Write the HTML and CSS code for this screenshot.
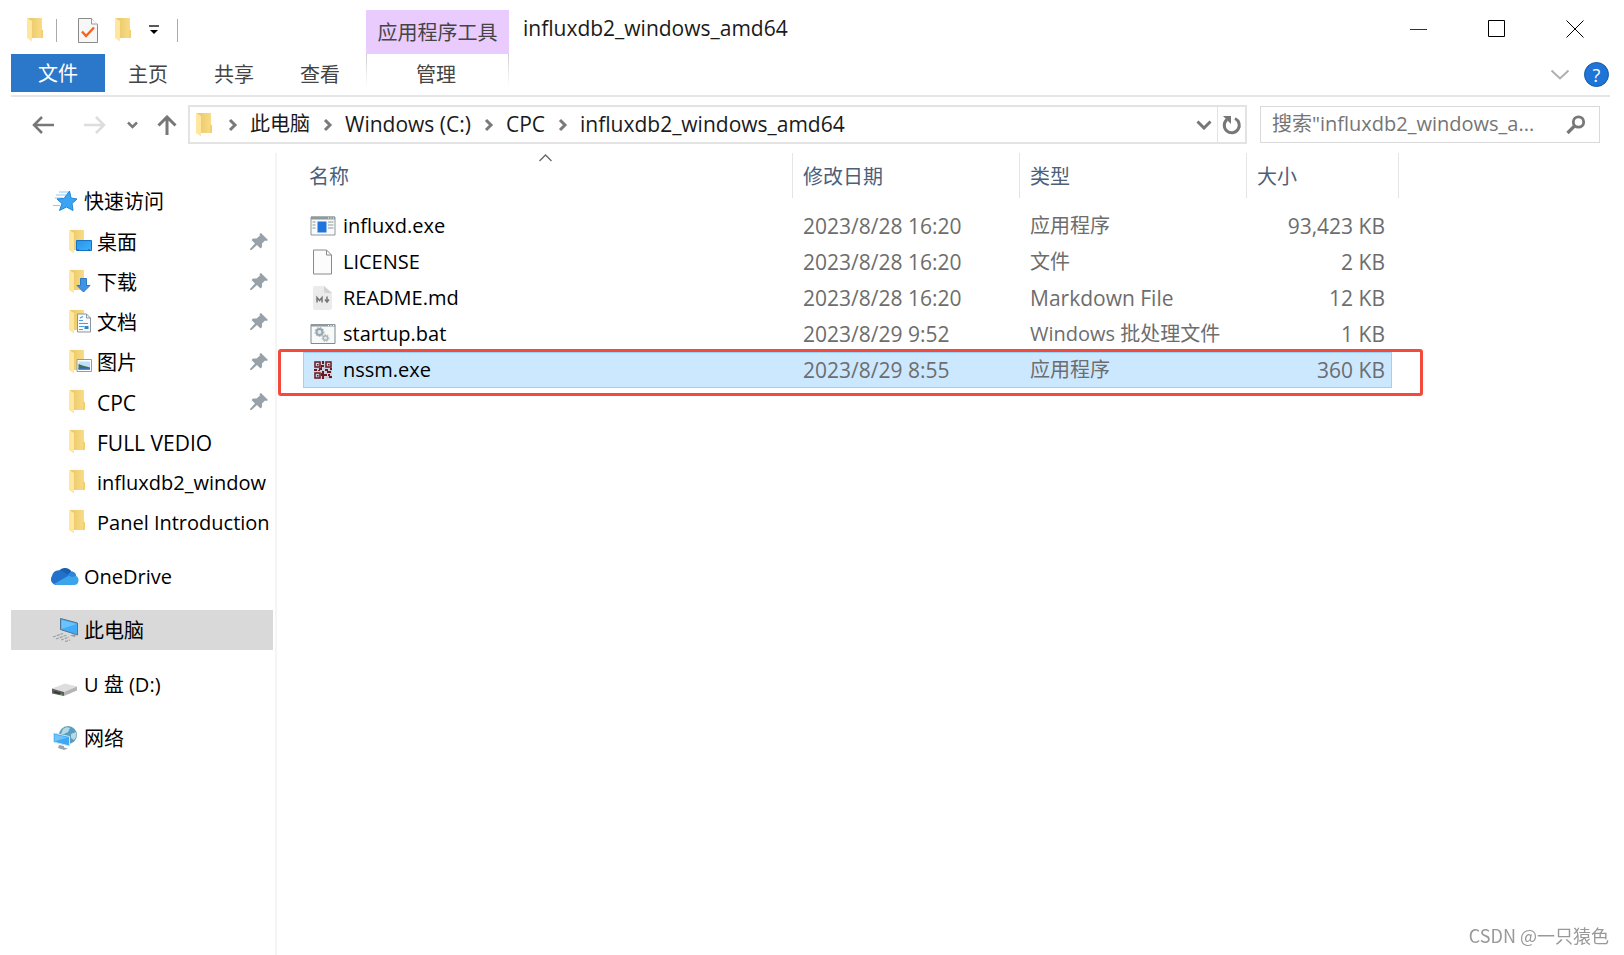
FILE: index.html
```html
<!DOCTYPE html>
<html lang="zh-CN">
<head>
<meta charset="UTF-8" />
<meta name="viewport" content="width=device-width, initial-scale=1" />
<title>influxdb2_windows_amd64</title>
<link rel="stylesheet" href="styles.css">
</head>
<body>

<svg class="sprite" aria-hidden="true">
  <defs>
    <linearGradient id="g-back" x1="0" x2="1"><stop offset="0" stop-color="#e9c767"/><stop offset="1" stop-color="#fbdd88"/></linearGradient>
    <linearGradient id="g-screen" x1="0" y1="0" x2="1" y2="1"><stop offset="0" stop-color="#2b93e6"/><stop offset="1" stop-color="#3fb0ff"/></linearGradient>
  </defs>
  <symbol id="folder" viewBox="0 0 24 24">
    <path d="M1 0h14v12h1v8H5z" fill="url(#g-back)"/>
    <path d="M14 12h2v8h-2z" fill="#f3cf74"/>
    <path d="M0 0l5 3v20.500l-5-3.500z" fill="#ffe7a0"/>
  </symbol>
  <symbol id="chevron-right" viewBox="0 0 10 14"><path d="M2 2l5 5-5 5" fill="none" stroke="#7a7a7a" stroke-width="3"/></symbol>
  <symbol id="pin" viewBox="0 0 18 18"><path d="M11 0l7 7-1.500 1-1.500-.5-3 3v3.500l-1.500 1.500-3.500-3.500-5.500 5H0v-1L5 10.500l-3.500-3.500L3 5.500h3.500l3.500-3L9.500 1z" fill="#98a1a9"/></symbol>
</svg>

<header class="titlebar">
  <div class="quick-bar">
    <svg class="icon" viewBox="0 0 24 24"><use href="#folder"/></svg>
    <span class="divider"></span>
    <button class="icon-btn" aria-label="属性">
      <svg width="20" height="25" viewBox="0 0 20 25"><path d="M.5.5h13l6 6v18H.5z" fill="#f7f7f7" stroke="#8a8a8a"/><path d="M13.500.5v5.500h6" fill="#fff" stroke="#999"/><path d="M4 13.500l4 4.500 8-8.500" fill="none" stroke="#f26522" stroke-width="2.400"/></svg>
    </button>
    <button class="icon-btn" aria-label="新建文件夹">
      <svg class="icon" viewBox="0 0 24 24"><use href="#folder"/></svg>
    </button>
    <button class="icon-btn" aria-label="自定义快速访问工具栏">
      <svg width="10" height="10" viewBox="0 0 10 10"><path d="M0 1h10" stroke="#222" stroke-width="1.500"/><path d="M1 5h8L5 9z" fill="#000"/></svg>
    </button>
    <span class="divider"></span>
  </div>
  <div class="context-label">应用程序工具</div>
  <h1 class="title latin">influxdb2_windows_amd64</h1>
  <div class="window-buttons">
    <button aria-label="最小化"><svg width="18" height="18" viewBox="0 0 18 18"><path d="M0 9.500h17" stroke="#333"/></svg></button>
    <button aria-label="最大化"><svg width="18" height="18" viewBox="0 0 18 18"><path d="M.5.5h16v16H.5z" fill="none" stroke="#000"/></svg></button>
    <button aria-label="关闭"><svg width="18" height="18" viewBox="0 0 18 18"><path d="M.5.5l17 17M17.500.5l-17 17" stroke="#000"/></svg></button>
  </div>
</header>

<nav class="ribbon">
  <button class="tab file-tab">文件</button>
  <button class="tab">主页</button>
  <button class="tab">共享</button>
  <button class="tab">查看</button>
  <button class="tab context-tab">管理</button>
  <div class="ribbon-end">
    <button class="icon-btn" aria-label="展开功能区"><svg width="20" height="12" viewBox="0 0 20 12"><path d="M1.500 1.500l8.500 8 8.500-8" fill="none" stroke="#b0b0b0" stroke-width="2"/></svg></button>
    <button class="help" aria-label="帮助">?</button>
  </div>
</nav>

<div class="navbar">
  <div class="history">
    <button class="icon-btn" aria-label="后退"><svg width="22" height="20" viewBox="0 0 22 20"><path d="M22 10H2M10 2l-8 8 8 8" fill="none" stroke="#777" stroke-width="2.500"/></svg></button>
    <button class="icon-btn" aria-label="前进"><svg width="22" height="20" viewBox="0 0 22 20"><path d="M0 10h20M12 2l8 8-8 8" fill="none" stroke="#ddd" stroke-width="2.500"/></svg></button>
    <button class="icon-btn" aria-label="最近浏览的位置"><svg width="11" height="8" viewBox="0 0 11 8"><path d="M1 1.500l4.500 4.500L10 1.500" fill="none" stroke="#7a7a7a" stroke-width="2.500"/></svg></button>
    <button class="icon-btn" aria-label="上移"><svg width="20" height="20" viewBox="0 0 20 20"><path d="M10 20V2M1.500 10.500L10 2l8.500 8.500" fill="none" stroke="#777" stroke-width="3"/></svg></button>
  </div>
  <div class="address">
    <svg class="icon" viewBox="0 0 24 24"><use href="#folder"/></svg>
    <svg class="sep" viewBox="0 0 10 14"><use href="#chevron-right"/></svg>
    <a href="#">此电脑</a>
    <svg class="sep" viewBox="0 0 10 14"><use href="#chevron-right"/></svg>
    <a class="latin" href="#">Windows (C:)</a>
    <svg class="sep" viewBox="0 0 10 14"><use href="#chevron-right"/></svg>
    <a class="latin" href="#">CPC</a>
    <svg class="sep" viewBox="0 0 10 14"><use href="#chevron-right"/></svg>
    <a class="latin" href="#">influxdb2_windows_amd64</a>
    <button class="icon-btn address-drop" aria-label="上一个位置"><svg width="16" height="10" viewBox="0 0 16 10"><path d="M1.500 1.500L8 8l6.500-6.500" fill="none" stroke="#777" stroke-width="3"/></svg></button>
    <button class="icon-btn refresh" aria-label="刷新"><svg width="20" height="20" viewBox="0 0 20 20"><path d="M13 3.500a7.500 7.500 0 1 1-8 1" fill="none" stroke="#777" stroke-width="3"/><path d="M1 1h8v8L6.500 6.500 4 4z" fill="#777"/></svg></button>
  </div>
  <div class="search">
    <input type="search" aria-label="搜索" placeholder="搜索&quot;influxdb2_windows_a...">
    <svg width="20" height="20" viewBox="0 0 20 20"><circle cx="12.500" cy="7" r="5.200" fill="none" stroke="#777" stroke-width="2.800"/><path d="M8.500 11L1.500 18" stroke="#777" stroke-width="3.200"/></svg>
  </div>
</div>

<div class="body">
  <aside class="sidebar">
    <a class="place" href="#">
      <svg class="icon-lg" viewBox="0 0 28 24"><path d="M5 6h10M4 9h8M8 3h9M2 16.500h7" stroke="#8cc9f7"/><path d="M18.500 2l1.500 7 6 1-5 4.500 1 7-6.500-3.500-7 3.500 2.500-7L6 10l7-.5z" fill="#3aa5f5" stroke="#1f85d6"/></svg>
      <span>快速访问</span>
    </a>
    <div class="pinned">
      <a class="place" href="#">
        <svg class="icon" viewBox="0 0 24 24"><use href="#folder"/><path d="M7.500 10.500h15v10h-15z" fill="url(#g-screen)" stroke="#1274c4"/><path d="M8 20h14" stroke="#0c5a9e" stroke-dasharray="2 9"/></svg>
        <span>桌面</span>
        <svg class="pin" viewBox="0 0 18 18"><use href="#pin"/></svg>
      </a>
      <a class="place" href="#">
        <svg class="icon" viewBox="0 0 24 24"><use href="#folder"/><path d="M11.500 8.500h6v7h3.500L14.500 22 8 15.500h3.500z" fill="#3f93e3" stroke="#2a78c6"/></svg>
        <span>下载</span>
        <svg class="pin" viewBox="0 0 18 18"><use href="#pin"/></svg>
      </a>
      <a class="place" href="#">
        <svg class="icon" viewBox="0 0 24 24"><use href="#folder"/><path d="M8.500 4h9l4 4v14h-13z" fill="#f8fafb" stroke="#8b969c"/><path d="M17.500 4v4h4" fill="none" stroke="#8b969c"/><path d="M10 10.500h4M10 13.500h9M10 16.500h5M10 19.500h4M11 8l3-1.500" stroke="#4a9edb" stroke-width="1.200"/><path d="M15.500 16h4v3h-4z" fill="#2f86c8"/></svg>
        <span>文档</span>
        <svg class="pin" viewBox="0 0 18 18"><use href="#pin"/></svg>
      </a>
      <a class="place" href="#">
        <svg class="icon" viewBox="0 0 24 24"><use href="#folder"/><path d="M8 9.500h14.500v12H8z" fill="#fff" stroke="#9a9a9a"/><path d="M9.500 11.500h11.500v8H9.500z" fill="#bfe0f8"/><path d="M9.500 14l4 1.500 7.500 2v2H9.500z" fill="#3f6f5c"/><path d="M9.500 18h11.500v1.500H9.500z" fill="#3b6fb0"/></svg>
        <span>图片</span>
        <svg class="pin" viewBox="0 0 18 18"><use href="#pin"/></svg>
      </a>
      <a class="place latin" href="#">
        <svg class="icon" viewBox="0 0 24 24"><use href="#folder"/></svg>
        <span>CPC</span>
        <svg class="pin" viewBox="0 0 18 18"><use href="#pin"/></svg>
      </a>
      <a class="place latin" href="#">
        <svg class="icon" viewBox="0 0 24 24"><use href="#folder"/></svg>
        <span>FULL VEDIO</span>
      </a>
      <a class="place" href="#">
        <svg class="icon" viewBox="0 0 24 24"><use href="#folder"/></svg>
        <span>influxdb2_window</span>
      </a>
      <a class="place" href="#">
        <svg class="icon" viewBox="0 0 24 24"><use href="#folder"/></svg>
        <span>Panel Introduction</span>
      </a>
    </div>
    <a class="place root" href="#">
      <svg class="icon-lg" viewBox="0 0 28 24"><path d="M7 9a7.500 7.500 0 0 1 13.500-1.500L19 13H7z" fill="#1b5fb0"/><path d="M5.500 21A5.700 5.700 0 0 1 1 12a7 7 0 0 1 11-4.500l7 5L6 21z" fill="#2272cc"/><path d="M3 20l14-8a9 9 0 0 1 3.500-4.500c3 0 4.500 2.500 4.500 4.500 2 .5 2.500 2.500 2.500 4.500 0 3-2 4.500-4.500 4.500H6z" fill="#3ba4ea"/><path d="M16 11l5-3.500c3 .5 4 2.500 4 4.500l-4 1z" fill="#2b86dc"/></svg>
      <span>OneDrive</span>
    </a>
    <a class="place root current" href="#">
      <svg class="icon-lg" viewBox="0 0 28 24"><path d="M9.500.5l17 4.500v12L9.500 11.500z" fill="#41acf8" stroke="#51748f"/><path d="M10.500 2l15 4-15 5z" fill="#6bc3ff"/><path d="M19 17.500l6-1.500-1 3z" fill="#8e9aa3"/><path d="M2 19l10-3.500M5 21l11-4M10 22l8-3M14 23.500l5-1.500" stroke="#98a0a6" stroke-width="1.200" stroke-dasharray="3 1"/></svg>
      <span>此电脑</span>
    </a>
    <a class="place root" href="#">
      <svg class="icon-lg" viewBox="0 0 28 24"><path d="M1 16.500L14 11.500l12 3L13 20z" fill="#dedede"/><path d="M1 16.500L13 20v4L1 21.500z" fill="#5f5f5f"/><path d="M13 20l13-5.500v4L13 24z" fill="#b4b4b4"/><path d="M3 19l7 2v1.500L3 20.500z" fill="#333"/><path d="M9 21.500l2 .5v1l-2-.5z" fill="#3fc04c"/></svg>
      <span>U 盘 (D:)</span>
    </a>
    <a class="place root" href="#">
      <svg class="icon-lg" viewBox="0 0 28 24"><circle cx="17" cy="9" r="9" fill="#5b9dbc"/><path d="M12 3c3-2 5-2 7-1l-2 4-4 2-3 0zM20 8l5-2c1 3 0 6-2 8l-3-2z" fill="#b6d9e6"/><path d="M2.500 7l16 3.500v9.500L2.500 16z" fill="#3da8f5" stroke="#cfe3f0"/><path d="M3.500 8.500l13 3-13 4z" fill="#6fc3fb"/><path d="M8 19l5 1v1.500l4 1-4 1.500-6-2z" fill="#9aa7b0"/></svg>
      <span>网络</span>
    </a>
  </aside>

  <main class="files">
    <table class="file-table">
      <thead>
        <tr>
          <th class="col-name">名称<svg class="sort" width="13" height="8" viewBox="0 0 13 8"><path d="M.5 7l6-6 6 6" fill="none" stroke="#666" stroke-width="1.300"/></svg></th>
          <th class="col-date">修改日期</th>
          <th class="col-type">类型</th>
          <th class="col-size">大小</th>
        </tr>
      </thead>
      <tbody>
        <tr>
          <td><div class="file"><svg class="file-icon" viewBox="0 0 26 26"><path d="M1 4h24v18H1z" fill="#fafafa" stroke="#8f989c"/><path d="M1 3.500h24v3H1z" fill="#8f989c"/><path d="M18 5h1M20.500 5h1M23 5h1" stroke="#fff"/><path d="M7.500 8.500h9v11h-9z" fill="#2176dd"/><path d="M2.500 9h3M2.500 12h3M2.500 15h3M18 9h5.500M18 12h5.500M18 15h5.500" stroke="#8f989c"/></svg><span>influxd.exe</span></div></td>
          <td class="latin">2023/8/28 16:20</td>
          <td>应用程序</td>
          <td class="size latin">93,423 KB</td>
        </tr>
        <tr>
          <td><div class="file"><svg class="file-icon" viewBox="0 0 26 26"><path d="M3.500 1h13l5 5v19h-18z" fill="#fcfcfc" stroke="#8a8a8a"/><path d="M16.500 1v5h5" fill="none" stroke="#8a8a8a"/></svg><span>LICENSE</span></div></td>
          <td class="latin">2023/8/28 16:20</td>
          <td>文件</td>
          <td class="size latin">2 KB</td>
        </tr>
        <tr>
          <td><div class="file"><svg class="file-icon" viewBox="0 0 26 26"><path d="M3 3q0-2 2-2h9l8 7v15q0 2-2 2H5q-2 0-2-2z" fill="#ebebeb"/><path d="M14 1v5q0 2 2 2h6z" fill="#d2d2d2"/><path d="M7 17.500v-5l2.500 3 2.500-3v5M17 11.500v4M15 14.500l2 2.500 2-2.500" fill="none" stroke="#777" stroke-width="1.500"/></svg><span>README.md</span></div></td>
          <td class="latin">2023/8/28 16:20</td>
          <td class="latin">Markdown File</td>
          <td class="size latin">12 KB</td>
        </tr>
        <tr>
          <td><div class="file"><svg class="file-icon" viewBox="0 0 26 26"><path d="M1 3.500h24v19H1z" fill="#f8fafa" stroke="#7f8a8e"/><path d="M1 3h24v2.500H1z" fill="#8f989c"/><path d="M18 4.500h1M20.500 4.500h1M23 4.500h1" stroke="#fff"/><circle cx="9.500" cy="11" r="3" fill="#dfe8ec" stroke="#98a6ac" stroke-width="2"/><circle cx="9.500" cy="11" r="4.500" fill="none" stroke="#98a6ac" stroke-dasharray="1.500 1.500"/><circle cx="15.500" cy="17" r="2.300" fill="#dfe8ec" stroke="#a9b5ba" stroke-width="1.500"/><circle cx="15.500" cy="17" r="3.500" fill="none" stroke="#a9b5ba" stroke-dasharray="1.500 1.500"/></svg><span>startup.bat</span></div></td>
          <td class="latin">2023/8/29 9:52</td>
          <td>Windows 批处理文件</td>
          <td class="size latin">1 KB</td>
        </tr>
        <tr class="selected">
          <td><div class="file"><svg class="file-icon" viewBox="0 0 26 26"><path d="M4 4h18v18H4z" fill="#c9cfe0"/><path d="M5 5h5v5H5zM16 5h5v5h-5zM5 16h5v5H5z" fill="none" stroke="#6b1a20" stroke-width="1.500"/><path d="M7 7h1.500v1.500H7zM18 7h1.500v1.500H18zM7 18h1.500v1.500H7zM12 4h2v3h-2zM11 8h3v2h-2v3h-3v-2h2zM4 12h3v2H4zM15 12h3v2h3v2h-4v-2h-2zM12 14h2v3h3v2h-3v3h-2v-3h-1v-3h1zM18 17h2v2h2v2h-3v-2h-1zM20 11h2v2h-2zM8 13h2v1H8z" fill="#6b1a20"/></svg><span>nssm.exe</span></div></td>
          <td class="latin">2023/8/29 8:55</td>
          <td>应用程序</td>
          <td class="size latin">360 KB</td>
        </tr>
      </tbody>
    </table>
  </main>
</div>

<div class="watermark">CSDN @一只猿色</div>

</body>
</html>
```

FILE: styles.css
```css
* { box-sizing: border-box; }
body { margin: 0; min-height: 100vh; display: flex; flex-direction: column; background: #fff; color: #1a1a1a; font-family: "Open Sans", "Noto Sans CJK SC", sans-serif; font-size: 20px; line-height: 28px; }
button, input { font: inherit; color: inherit; border: 0; background: none; padding: 0; }
a { color: inherit; text-decoration: none; }
svg { display: block; flex: none; }
.latin { font-size: 21px; }
.sprite { position: absolute; width: 0; height: 0; }
.icon { width: 24px; height: 24px; }
.icon-lg { width: 28px; height: 24px; }
.icon-btn { display: flex; align-items: center; justify-content: center; }

/* title bar */
.titlebar { display: flex; height: 54px; padding: 0 10px 0 11px; }
.quick-bar { display: flex; align-items: center; width: 355px; padding: 6px 0 0 16px; }
.quick-bar .divider { width: 1px; height: 23px; background: #aaa; }
.quick-bar .icon { margin-right: 5px; }
.quick-bar .icon-btn { margin-left: 17px; }
.quick-bar .icon-btn:first-of-type { margin-left: 21px; }
.quick-bar .icon-btn:last-of-type { margin: 0 18px 0 5px; }
.context-label { width: 143px; margin-top: 10px; line-height: 46px; text-align: center; background: #e9cbfd; color: #444; overflow: hidden; }
.title { flex: 1; margin: 0; padding-left: 14px; font-weight: 400; line-height: 56px; }
.window-buttons { display: flex; padding-top: 4px; }
.window-buttons button { width: 78px; height: 50px; display: flex; align-items: center; justify-content: center; }

/* ribbon tabs */
.ribbon { display: flex; margin: 0 14px 0 11px; height: 43px; border-bottom: 2px solid #e6e6e6; color: #444; }
.tab { width: 86px; height: 40px; padding-top: 2px; }
.file-tab { width: 94px; height: 38px; background: #2b77c9; color: #fff; }
.context-tab { width: 143px; margin-left: 3px; padding-right: 3px; border: 1px solid; border-width: 0 1px; border-image: linear-gradient(#ccc, #fff 80%) 1; }
.ribbon-end { display: flex; align-items: center; gap: 14px; margin-left: auto; padding-right: 1px; }
.help { width: 25px; height: 25px; border-radius: 50%; border: 1px solid #1459a8; background: #1f74d8; color: #fff; font-size: 18px; line-height: 22px; }

/* address row */
.navbar { display: flex; align-items: center; padding: 8px 24px 9px 32px; }
.history { display: flex; align-items: center; width: 156px; }
.history .icon-btn { margin-right: 19px; }
.history .icon-btn:first-child { margin-right: 30px; }
.history .icon-btn:nth-child(2) { margin-right: 21px; }
.address { flex: 1; display: flex; align-items: center; height: 39px; border: 2px solid #e3e3e3; padding-left: 6px; }
.address .icon { margin-right: 8px; }
.address .sep { width: 10px; height: 14px; margin-right: 12px; }
.address a { margin-right: 13px; padding-bottom: 2px; }
.address-drop { margin-left: auto; padding: 0 5px; }
.refresh { width: 28px; height: 35px; border-left: 1px solid #e3e3e3; }
.search { display: flex; align-items: center; width: 340px; height: 37px; margin-left: 13px; padding: 0 13px 0 11px; border: 1px solid #d9d9d9; }
.search input { flex: 1; min-width: 0; padding-bottom: 2px; outline: 0; }
.search input::placeholder { color: #757575; opacity: 1; }

/* folders on the left */
.body { flex: 1; display: flex; }
.sidebar { width: 266px; margin-left: 11px; padding: 28px 2px 0 0; border-right: 2px solid #f5f5f5; color: #000; }
.place { display: flex; align-items: center; height: 40px; padding-left: 40px; white-space: nowrap; overflow: hidden; }
.place span { flex: 1; margin-left: 5px; padding-top: 2px; }
.pinned { margin-top: 1px; }
.pinned .place { padding-left: 58px; }
.pinned .place span { margin-left: 4px; }
.pin { width: 18px; height: 18px; margin-right: 5px; }
.root { margin-top: 14px; }
.current { background: #d9d9d9; }

/* file list */
.files { flex: 1; padding-left: 26px; }
.file-table { width: 1096px; table-layout: fixed; border-collapse: separate; border-spacing: 0; }
.file-table th { position: relative; height: 45px; padding: 2px 0 0 10px; border-right: 1px solid #e5e5e5; text-align: left; font-weight: 400; color: #4c607a; }
.file-table .col-name { padding-left: 6px; }
.col-date, .col-type { width: 227px; }
.col-size { width: 152px; }
.sort { position: absolute; top: 1px; left: 50%; margin-left: -9px; }
.file-table tbody::before { content: ""; display: block; height: 10px; }
.file-table td { height: 36px; padding: 0 0 0 10px; color: #6d6d6d; white-space: nowrap; }
.file-table td:first-child { padding-left: 7px; color: #000; }
.file-table .size { padding-right: 14px; text-align: right; }
.file { display: flex; align-items: center; }
.file-icon { width: 26px; height: 26px; margin-right: 7px; }
.selected { position: relative; z-index: 0; }
.selected td:first-child::before { content: ""; position: absolute; inset: 0 7px 0 0; z-index: -1; background: #cce8ff; border: 1px solid #99d1ff; }
.selected td:first-child::after { content: ""; position: absolute; inset: -3px -24px -8px -25px; border: 3px solid #f44a3c; border-radius: 3px; }

.watermark { position: fixed; right: 15px; bottom: 6px; font-family: "Noto Sans CJK SC", sans-serif; font-size: 18px; color: #999; }
```
